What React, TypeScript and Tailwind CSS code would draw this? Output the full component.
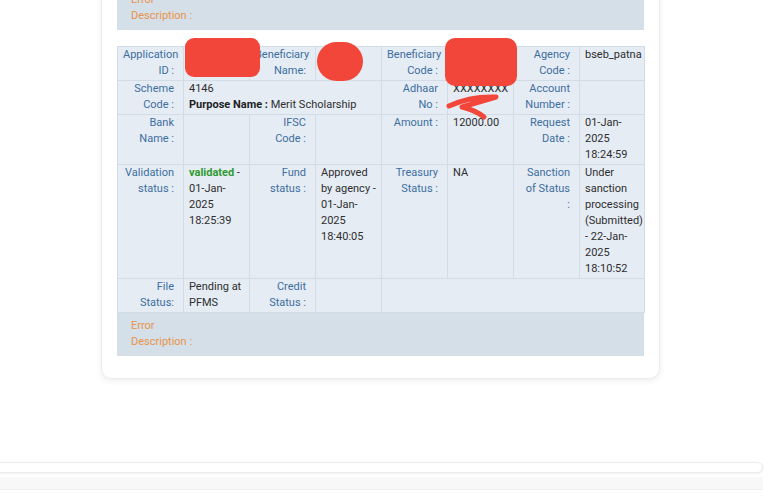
import React from 'react';

const label = 'border border-[#d2dce6] pl-[5px] pr-[9px] pt-0 pb-px text-right align-top text-[#3d6e9f]';
const value = 'border border-[#d2dce6] pl-[5px] pr-[2px] pt-0 pb-px text-left align-top text-[#2e2e2e]';

function ErrorRow() {
  return (
    <div className="h-[43px] bg-[#d5dfe8] pl-[14px] pt-[5px] text-[#e8934a]">
      Error
      <br />
      Description :
    </div>
  );
}

function Label({ top, bottom }: { top: string; bottom: string }) {
  return (
    <td className={label}>
      {top}
      <br />
      {bottom}
    </td>
  );
}

export default function App() {
  return (
    <main className="h-[496px] overflow-hidden bg-white font-['Roboto',sans-serif] text-[11px] leading-[16px]">
      <div className="ml-[101px] -mt-[13px] w-[559px] rounded-b-[10px] border border-t-0 border-[#ececec] bg-white px-[15px] pb-[22px] shadow-[0_2px_6px_rgba(0,0,0,0.07)]">
        <ErrorRow />

        <div className="relative mt-[16px]">
          <table className="w-[527px] table-fixed border-collapse bg-[#e5ecf4]">
            <colgroup>
              <col className="w-[66px]" />
              <col className="w-[66px]" />
              <col className="w-[66px]" />
              <col className="w-[66px]" />
              <col className="w-[66px]" />
              <col className="w-[66px]" />
              <col className="w-[66px]" />
              <col className="w-[65px]" />
            </colgroup>
            <tbody>
              <tr>
                <Label top="Application" bottom="ID :" />
                <td className={value}></td>
                <Label top="Beneficiary" bottom="Name:" />
                <td className={value}></td>
                <Label top="Beneficiary" bottom="Code :" />
                <td className={value}></td>
                <Label top="Agency" bottom="Code :" />
                <td className={value}>bseb_patna</td>
              </tr>
              <tr>
                <Label top="Scheme" bottom="Code :" />
                <td className={value} colSpan={3}>
                  4146
                  <br />
                  <b className="text-[#1f1f1f]">Purpose Name :</b> Merit Scholarship
                </td>
                <Label top="Adhaar" bottom="No :" />
                <td className={value}>XXXXXXXX</td>
                <Label top="Account" bottom="Number :" />
                <td className={value}></td>
              </tr>
              <tr>
                <Label top="Bank" bottom="Name :" />
                <td className={value}></td>
                <Label top="IFSC" bottom="Code :" />
                <td className={value}></td>
                <td className={label}>Amount :</td>
                <td className={value}>12000.00</td>
                <Label top="Request" bottom="Date :" />
                <td className={value}>
                  01-Jan-
                  <br />
                  2025
                  <br />
                  18:24:59
                </td>
              </tr>
              <tr>
                <Label top="Validation" bottom="status :" />
                <td className={value}>
                  <b className="text-[#2f9a2f]">validated</b> -
                  <br />
                  01-Jan-
                  <br />
                  2025
                  <br />
                  18:25:39
                </td>
                <Label top="Fund" bottom="status :" />
                <td className={value}>
                  Approved
                  <br />
                  by agency -
                  <br />
                  01-Jan-
                  <br />
                  2025
                  <br />
                  18:40:05
                </td>
                <Label top="Treasury" bottom="Status :" />
                <td className={value}>NA</td>
                <td className={label}>
                  Sanction
                  <br />
                  of Status
                  <br />:
                </td>
                <td className={value}>
                  Under
                  <br />
                  sanction
                  <br />
                  processing
                  <br />
                  (Submitted)
                  <br />- 22-Jan-
                  <br />
                  2025
                  <br />
                  18:10:52
                </td>
              </tr>
              <tr>
                <Label top="File" bottom="Status:" />
                <td className={value}>
                  Pending at
                  <br />
                  PFMS
                </td>
                <Label top="Credit" bottom="Status :" />
                <td className={value}></td>
                <td className={value} colSpan={4}></td>
              </tr>
            </tbody>
          </table>
          <ErrorRow />

          {/* redaction marks */}
          <div className="absolute left-[68px] top-[-8px] h-[39px] w-[75px] rounded-[9px] bg-[#f3463a]" />
          <div className="absolute left-[200px] top-[-4px] h-[39px] w-[46px] rounded-full bg-[#f3463a]" />
          <div className="absolute left-[328px] top-[-8px] h-[48px] w-[72px] rounded-[10px] bg-[#f3463a]" />
          <svg className="absolute left-[323px] top-[44px]" width="64" height="32" viewBox="0 0 64 32">
            <path
              d="M9 16 Q30 6 56 7 L22 17 Q35 20 44 27"
              fill="none"
              stroke="#f3463a"
              strokeWidth="5"
              strokeLinecap="round"
              strokeLinejoin="round"
            />
          </svg>
        </div>
      </div>

      <div className="mt-[83px] h-[11px] w-[763px] rounded-r-md border border-l-0 border-[#ebebeb] bg-white shadow-[0_1px_3px_rgba(0,0,0,0.06)]" />
      <div className="mt-[4px] h-[13px] w-[763px] border-b border-[#efefef] bg-[#f8f8f8]" />
    </main>
  );
}
